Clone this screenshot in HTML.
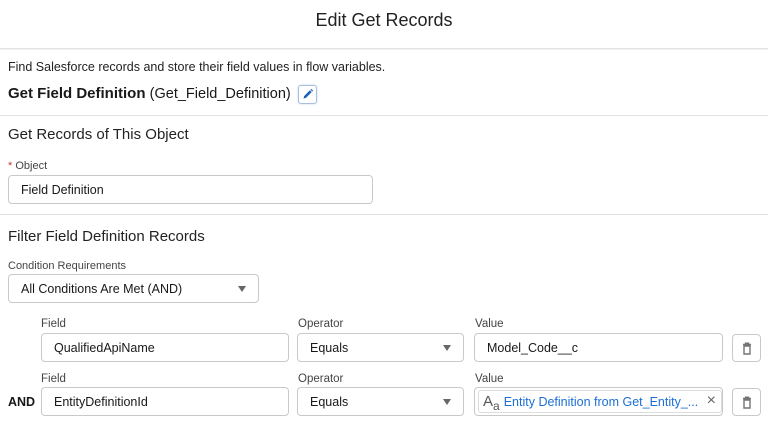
<!DOCTYPE html>
<html><head><meta charset="utf-8"><style>
*{box-sizing:border-box;margin:0;padding:0}
body{width:768px;height:423px;overflow:hidden;background:#fff;font-family:"Liberation Sans",sans-serif;color:#181818;position:relative}
.a{position:absolute;white-space:nowrap}
.hr{position:absolute;left:0;width:768px;height:1px;background:#e3e3e3}
.box{position:absolute;border:1px solid #c9c9c9;border-radius:4px;background:#fff;font-size:12.5px;padding-left:12px;display:flex;align-items:center;color:#181818;white-space:nowrap}
.lbl{position:absolute;font-size:11px;color:#444}
.sl{font-size:11.5px}
.tri{position:absolute;right:12px;top:50%;margin-top:-3px;width:0;height:0;border-left:4.5px solid transparent;border-right:4.5px solid transparent;border-top:6px solid #666}
.del{position:absolute;border:1px solid #c9c9c9;border-radius:4px;width:29px;height:28px;display:flex;align-items:center;justify-content:center}
</style></head><body>
<div class="a" style="left:0;width:768px;text-align:center;top:10px;font-size:18px;color:#222">Edit Get Records</div>
<div class="hr" style="top:48px"></div>
<div class="hr" style="top:49px;background:#f3f3f3"></div>
<div class="a" style="left:8px;top:60px;font-size:12.5px;color:#222">Find Salesforce records and store their field values in flow variables.</div>
<div class="a" style="left:8px;top:85px;font-size:15px"><b>Get Field Definition</b> <span style="font-size:14.5px">(Get_Field_Definition)</span></div>
<div class="a" style="left:298px;top:85px;width:19px;height:19px;border:1px solid #a9bfe0;border-radius:3px;background:#fff;box-shadow:0 0 2px #c4d5ee">
<svg width="17" height="17" viewBox="0 0 17 17" style="position:absolute;left:0;top:0"><path d="M4.5 12.5l.6-2.4 5.8-5.8 1.8 1.8-5.8 5.8z M11.5 3.7l.8-.8 1.8 1.8-.8.8z" fill="#1b5fb5"/></svg></div>
<div class="hr" style="top:115px"></div>
<div class="a" style="left:8px;top:126px;font-size:15px;color:#222">Get Records of This Object</div>
<div class="lbl" style="left:8px;top:160px"><span style="color:#c23934">*</span> Object</div>
<div class="box" style="left:8px;top:175px;width:365px;height:29px">Field Definition</div>
<div class="hr" style="top:214px"></div>
<div class="a" style="left:8px;top:228px;font-size:15px;color:#222">Filter Field Definition Records</div>
<div class="lbl" style="left:8px;top:260px">Condition Requirements</div>
<div class="box" style="left:8px;top:274px;width:251px;height:29px">All Conditions Are Met (AND)<div class="tri"></div></div>

<div class="lbl sl" style="left:41px;top:318px">Field</div>
<div class="lbl sl" style="left:298px;top:318px">Operator</div>
<div class="lbl sl" style="left:475px;top:318px">Value</div>
<div class="box" style="left:41px;top:333px;width:248px;height:29px">QualifiedApiName</div>
<div class="box" style="left:297px;top:333px;width:167px;height:29px">Equals<div class="tri"></div></div>
<div class="box" style="left:474px;top:333px;width:249px;height:29px">Model_Code__c</div>
<div class="del" style="left:732px;top:334px"><svg width="12" height="13" viewBox="0 0 12 13"><path d="M2 2.5h8M4.5 2.5V1.2h3v1.3M3 4h6v8H3z" fill="none" stroke="#747474" stroke-width="1.4"/></svg></div>

<div class="lbl sl" style="left:41px;top:373px">Field</div>
<div class="lbl sl" style="left:298px;top:373px">Operator</div>
<div class="lbl sl" style="left:475px;top:373px">Value</div>
<div class="a" style="left:8px;top:395px;font-size:12.5px;font-weight:bold">AND</div>
<div class="box" style="left:41px;top:387px;width:248px;height:29px">EntityDefinitionId</div>
<div class="box" style="left:297px;top:387px;width:167px;height:29px">Equals<div class="tri"></div></div>
<div class="box" style="left:474px;top:387px;width:249px;height:29px;padding-left:3px">
<div style="position:relative;width:244px;height:23px;border:1px solid #dcdcdc;border-radius:3px;display:flex;align-items:center;overflow:hidden">
<span style="font-size:15px;color:#555;margin-left:4px">A</span><span style="font-size:12px;color:#555;margin-top:8px">a</span>
<span style="color:#1b6ed4;margin-left:4px;font-size:12.5px">Entity Definition from Get_Entity_...</span>
<span style="position:absolute;right:5px;top:1px;font-size:16px;color:#666;background:#fff">×</span></div></div>
<div class="del" style="left:732px;top:388px"><svg width="12" height="13" viewBox="0 0 12 13"><path d="M2 2.5h8M4.5 2.5V1.2h3v1.3M3 4h6v8H3z" fill="none" stroke="#747474" stroke-width="1.4"/></svg></div>
</body></html>
